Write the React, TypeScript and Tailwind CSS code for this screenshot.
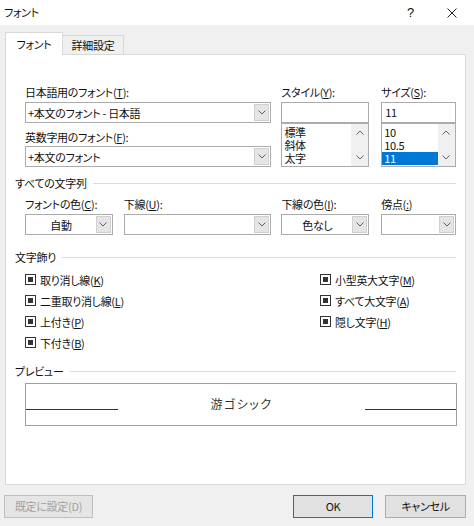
import type { ReactNode } from "react";

function Chevron({ up = false }: { up?: boolean }) {
  return (
    <svg width="8" height="5" viewBox="0 0 8 5" className="block">
      <path
        d={up ? "M0.5 4.5 L4 1 L7.5 4.5" : "M0.5 0.5 L4 4 L7.5 0.5"}
        fill="none"
        stroke="#606060"
        strokeWidth="1"
      />
    </svg>
  );
}

function Combo({ text, center = false, className = "" }: { text?: string; center?: boolean; className?: string }) {
  return (
    <div className={`h-[21px] flex border border-[#acacac] bg-white ${className}`}>
      <div className={`flex-1 flex items-center leading-[16px] ${center ? "justify-center" : "pl-[2px]"}`}>{text}</div>
      <div className="w-[15px] my-[1px] mr-[1px] flex items-center justify-center bg-[#e5e5e5] border border-[#d0d0d0]">
        <Chevron />
      </div>
    </div>
  );
}

function Label({ children }: { children: ReactNode }) {
  return <div className="h-[16px] leading-[16px] whitespace-nowrap">{children}</div>;
}

function ListBox({ items, selected }: { items: string[]; selected?: number }) {
  return (
    <div className="h-[44px] flex border border-[#acacac] bg-white">
      <div className="flex-1 pt-[2px]">
        {items.map((it, i) => (
          <div
            key={it}
            className={`h-[13px] leading-[13px] pl-[2px] ${i === selected ? "bg-[#0078d7] text-white" : ""}`}
          >
            {it}
          </div>
        ))}
      </div>
      <div className="w-[17px] bg-[#f0f0f0] flex flex-col items-center justify-between py-[6px]">
        <Chevron up />
        <Chevron />
      </div>
    </div>
  );
}

function Group({ title, className = "" }: { title: string; className?: string }) {
  return (
    <div className={`flex items-center h-[16px] ${className}`}>
      <span className="leading-[16px]">{title}</span>
      <div className="flex-1 h-px bg-[#dcdcdc] ml-[6px]" />
    </div>
  );
}

function Check({ children }: { children: ReactNode }) {
  return (
    <div className="h-[21px] flex items-center gap-[4px]">
      <div className="w-[11px] h-[11px] border border-[#333] bg-white flex items-center justify-center">
        <div className="w-[5px] h-[5px] bg-[#333]" />
      </div>
      <span className="leading-[16px]">{children}</span>
    </div>
  );
}

export default function App() {
  return (
    <div className="w-[474px] h-[526px] bg-[#f0f0f0] text-[11px] tracking-[-0.3px] text-[#111] font-['Noto_Sans_CJK_JP','Noto_Sans',sans-serif] [font-feature-settings:'palt'] overflow-hidden">
      {/* Title bar */}
      <div className="h-[25px] bg-white flex items-center pl-[4px] pr-[17px]">
        <span>フォント</span>
        <div className="flex-1" />
        <span className="mr-[33px] text-[13px] font-['Liberation_Sans',sans-serif]">?</span>
        <svg width="10" height="10" viewBox="0 0 10 10">
          <path d="M0.5 0.5 L9.5 9.5 M9.5 0.5 L0.5 9.5" stroke="#222" strokeWidth="1" />
        </svg>
      </div>

      {/* Tabs */}
      <div className="h-[29px] flex items-end pl-[5px]">
        <div className="relative z-10 -mb-px h-[23px] w-[58px] bg-white border border-b-0 border-[#d9d9d9] flex items-center justify-center">
          フォント
        </div>
        <div className="h-[19px] w-[61px] bg-[#f0f0f0] border border-l-0 border-b-0 border-[#d9d9d9] flex items-center justify-center">
          詳細設定
        </div>
      </div>

      {/* Panel */}
      <div className="ml-[5px] w-[461px] h-[431px] bg-white border border-[#d9d9d9] px-[9px]">
        <div className="flex ml-[10px] mt-[29px]">
          <div className="w-[247px]">
            <Label>
              日本語用のフォント(<u>T</u>):
            </Label>
            <Combo className="mt-[2px]" text="+本文のフォント - 日本語" />
            <div className="mt-[6px]">
              <Label>
                英数字用のフォント(<u>F</u>):
              </Label>
            </div>
            <Combo className="mt-[1px]" text="+本文のフォント" />
          </div>
          <div className="w-[88px] ml-[10px]">
            <Label>
              スタイル(<u>Y</u>):
            </Label>
            <div className="mt-[2px] h-[21px] border border-[#acacac] bg-white" />
            <ListBox items={["標準", "斜体", "太字"]} />
          </div>
          <div className="w-[75px] ml-[12px]">
            <Label>
              サイズ(<u>S</u>):
            </Label>
            <div className="mt-[2px] h-[21px] border border-[#acacac] bg-white pl-[3px] flex items-center">11</div>
            <ListBox items={["10", "10.5", "11"]} selected={2} />
          </div>
        </div>

        <Group title="すべての文字列" className="mt-[8px]" />

        <div className="flex ml-[10px] mt-[5px]">
          <div className="w-[88px]">
            <Label>
              フォントの色(<u>C</u>):
            </Label>
            <Combo className="mt-[2px]" text="自動" center />
          </div>
          <div className="w-[148px] ml-[11px]">
            <Label>
              下線(<u>U</u>):
            </Label>
            <Combo className="mt-[2px]" />
          </div>
          <div className="w-[88px] ml-[10px]">
            <Label>
              下線の色(<u>I</u>):
            </Label>
            <Combo className="mt-[2px]" text="色なし" center />
          </div>
          <div className="w-[75px] ml-[12px]">
            <Label>
              傍点(<u>:</u>)
            </Label>
            <Combo className="mt-[2px]" />
          </div>
        </div>

        <Group title="文字飾り" className="mt-[14px]" />

        <div className="flex ml-[10px] mt-[4px]">
          <div className="w-[295px]">
            <Check>
              取り消し線(<u>K</u>)
            </Check>
            <Check>
              二重取り消し線(<u>L</u>)
            </Check>
            <Check>
              上付き(<u>P</u>)
            </Check>
            <Check>
              下付き(<u>B</u>)
            </Check>
          </div>
          <div>
            <Check>
              小型英大文字(<u>M</u>)
            </Check>
            <Check>
              すべて大文字(<u>A</u>)
            </Check>
            <Check>
              隠し文字(<u>H</u>)
            </Check>
          </div>
        </div>

        <Group title="プレビュー" className="mt-[10px]" />

        <div className="ml-[10px] mt-[4px] w-[432px] h-[43px] border border-[#a0a0a0] flex items-end pb-[15px]">
          <div className="w-[92px] h-px bg-[#333]" />
          <div className="flex-1 text-center leading-[16px] text-[12px] tracking-[1.5px] text-[#333] -mb-[2px]">游ゴシック</div>
          <div className="w-[91px] h-px bg-[#333]" />
        </div>
      </div>

      {/* Buttons */}
      <div className="flex mt-[10px] pl-[4px] pr-[8px]">
        <div className="w-[89px] h-[23px] bg-[#e5e5e5] border border-[#bfbfbf] text-[#a0a0a0] flex items-center justify-center">
          既定に設定(D)
        </div>
        <div className="flex-1" />
        <div className="w-[80px] h-[23px] bg-[#e1e1e1] border border-[#0078d7] flex items-center justify-center">
          OK
        </div>
        <div className="w-[81px] h-[23px] ml-[12px] bg-[#e1e1e1] border border-[#adadad] flex items-center justify-center">
          キャンセル
        </div>
      </div>
    </div>
  );
}
